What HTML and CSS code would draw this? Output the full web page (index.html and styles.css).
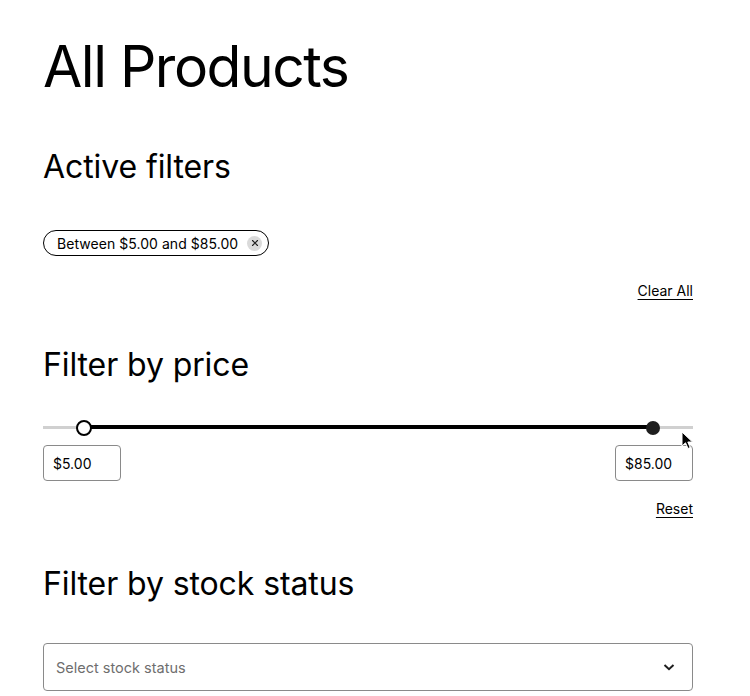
FILE: index.html
```html
<!DOCTYPE html>
<html>
<head>
<meta charset="utf-8">
<link rel="stylesheet" href="styles.css">
</head>
<body>
<main class="page">
  <h1 class="title">All Products</h1>

  <section class="block active">
    <h2 class="heading">Active filters</h2>
    <div class="chips">
      <span class="chip">Between $5.00 and $85.00
        <span class="chip-x"><svg width="8" height="8" viewBox="0 0 8 8"><path d="M1.5 1.5L6.5 6.5M6.5 1.5L1.5 6.5" stroke="#1e1e1e" stroke-width="1.1" stroke-linecap="round"/></svg></span>
      </span>
    </div>
    <div class="link-row"><a class="link" href="#">Clear All</a></div>
  </section>

  <section class="block price">
    <h2 class="heading">Filter by price</h2>
    <div class="slider">
      <div class="track"></div>
      <div class="range"></div>
      <span class="thumb thumb-min"></span>
      <span class="thumb thumb-max"></span>
      <svg class="cursor" width="14" height="20" viewBox="0 0 14 20"><path d="M1 1 L1 15 L4.5 11.8 L7 17.5 L9.2 16.5 L6.8 11 L11.5 11 Z" fill="#000" stroke="#fff" stroke-width="1"/></svg>
    </div>
    <div class="inputs">
      <input class="price-input" type="text" value="$5.00">
      <input class="price-input" type="text" value="$85.00">
    </div>
    <div class="link-row reset"><a class="link" href="#">Reset</a></div>
  </section>

  <section class="block stock">
    <h2 class="heading">Filter by stock status</h2>
    <div class="select">
      <span class="placeholder">Select stock status</span>
      <svg class="chev" width="14" height="14" viewBox="0 0 14 14"><path d="M2.5 5 L7 9.2 L11.5 5" fill="none" stroke="#1e1e1e" stroke-width="2"/></svg>
    </div>
  </section>
</main>
</body>
</html>
```
FILE: styles.css
```css
html, body {
  margin: 0;
  padding: 0;
  background: #fff;
}
body {
  font-family: Inter, "Noto Sans", sans-serif;
  color: #000;
}
.page {
  width: 650px;
  padding: 27px 0 0 43px;
}
.title {
  font-size: 57px;
  font-weight: 400;
  line-height: 80px;
  margin: 0;
  letter-spacing: -1.5px;
}
.heading {
  font-size: 32px;
  font-weight: 400;
  line-height: 40px;
  margin: 0;
  letter-spacing: -0.1px;
}
.active { margin-top: 40px; }
.chips { margin-top: 43px; display: flex; }
.chip {
  display: inline-flex;
  align-items: center;
  box-sizing: content-box;
  height: 24px;
  border: 1px solid #000;
  border-radius: 13px;
  padding: 0 6px 0 13px;
  font-size: 14px;
  letter-spacing: 0.05px;
  gap: 9px;
}
.chip-x {
  width: 15px;
  height: 15px;
  border-radius: 50%;
  background: #dadada;
  display: inline-flex;
  align-items: center;
  justify-content: center;
}
.link-row {
  display: flex;
  justify-content: flex-end;
  margin-top: 26px;
}
.link {
  color: #000;
  font-size: 14px;
  line-height: 17px;
  text-decoration: underline;
  text-underline-offset: 3px;
}
.price { margin-top: 46px; }
.slider {
  position: relative;
  height: 20px;
  margin-top: 33px;
}
.track {
  position: absolute;
  left: 0; right: 0;
  top: 8px;
  height: 3px;
  background: #d0d0d0;
}
.range {
  position: absolute;
  left: 41px;
  width: 568px;
  top: 7px;
  height: 4px;
  background: #000;
}
.thumb {
  position: absolute;
  top: 2px;
  width: 16px;
  height: 16px;
  border-radius: 50%;
  box-sizing: border-box;
}
.thumb-min {
  left: 33px;
  background: #fff;
  border: 2px solid #000;
}
.thumb-max {
  left: 603px;
  top: 3px;
  width: 14px;
  height: 14px;
  background: #1e1e1e;
}
.cursor {
  position: absolute;
  left: 638px;
  top: 13px;
}
.inputs {
  display: flex;
  justify-content: space-between;
  margin-top: 7px;
}
.price-input {
  width: 78px;
  height: 36px;
  box-sizing: border-box;
  border: 1px solid #8a8a8a;
  border-radius: 4px;
  padding: 0 9px;
  font-family: Inter, sans-serif;
  font-size: 14px;
  color: #000;
  margin: 0;
}
.reset { margin-top: 19px; }
.stock { margin-top: 47px; }
.select {
  margin-top: 39px;
  height: 48px;
  box-sizing: border-box;
  border: 1px solid #8a8a8a;
  border-radius: 4px;
  display: flex;
  align-items: center;
  justify-content: space-between;
  padding: 0 16px 0 12px;
}
.placeholder {
  font-size: 14.5px;
  color: #6e6e6e;
}
```
